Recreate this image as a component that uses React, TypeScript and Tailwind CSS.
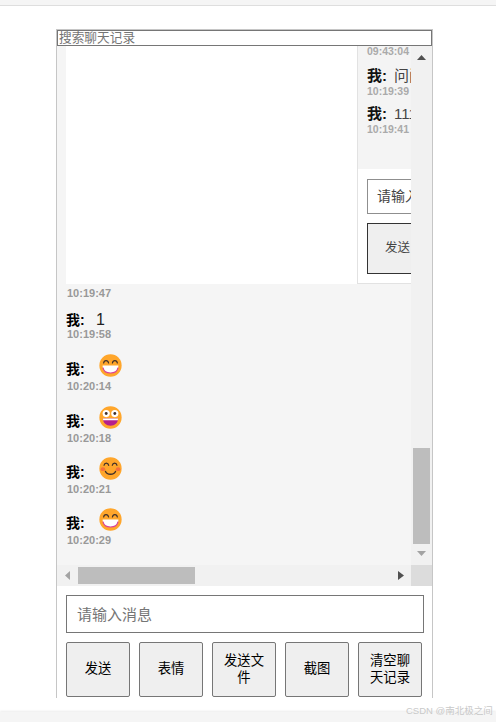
const font = { fontFamily: '"Liberation Sans", "Noto Sans CJK SC", sans-serif' }

function Grin() {
  return (
    <svg width="23" height="23" viewBox="0 0 32 32">
      <circle cx="16" cy="16" r="15.5" fill="#ffa62b" />
      <path d="M6.5 12.5c.5-4.5 6-4.5 6.8 0M18.7 12.5c.6-4.5 6.2-4.5 6.8 0" fill="none" stroke="#40302a" strokeWidth="1.7" strokeLinecap="round" />
      <path d="M5 16h22c0 6.5-4.5 10.5-11 10.5S5 22.5 5 16z" fill="#fff" />
      <path d="M5.5 19c1 5 5 7.5 10.5 7.5s9.5-2.5 10.5-7.5" fill="none" stroke="#d8409a" strokeWidth="1.6" />
    </svg>
  )
}

function Wow() {
  return (
    <svg width="23" height="23" viewBox="0 0 32 32">
      <circle cx="16" cy="16" r="15.5" fill="#ffa62b" />
      <circle cx="10" cy="10.5" r="5" fill="#fff" />
      <circle cx="22" cy="10.5" r="5" fill="#fff" />
      <circle cx="10" cy="10.5" r="2" fill="#40302a" />
      <circle cx="22" cy="10.5" r="2" fill="#40302a" />
      <path d="M5.5 17.5h21c0 6-4.5 10-10.5 10s-10.5-4-10.5-10z" fill="#b5208c" />
      <path d="M5.5 17.5h21l-.3 2.2h-20.4z" fill="#fff" />
    </svg>
  )
}

function Smile() {
  return (
    <svg width="23" height="23" viewBox="0 0 32 32">
      <circle cx="16" cy="16" r="15.5" fill="#ffa62b" />
      <ellipse cx="5.5" cy="17" rx="3.2" ry="2.6" fill="#f5703c" />
      <ellipse cx="26.5" cy="17" rx="3.2" ry="2.6" fill="#f5703c" />
      <path d="M7 11.5c.7-4 5.7-4 6.5 0M18.5 11.5c.7-4 5.8-4 6.5 0" fill="none" stroke="#40302a" strokeWidth="1.7" strokeLinecap="round" />
      <path d="M9 20c2 5.5 12 5.5 14 0" fill="none" stroke="#40302a" strokeWidth="2" strokeLinecap="round" />
    </svg>
  )
}

function EmojiMsg({ time, children }: { time: string; children: React.ReactNode }) {
  return (
    <div className="mt-[12.3px] flex flex-col">
      <div className="flex h-[23px] items-end">
        <b className="w-[33px] text-[14px] leading-[16px] text-black">我:</b>
        {children}
      </div>
      <span className="mt-[3px] pl-[1px] text-[11px] font-bold leading-[13px] text-[#999]">{time}</span>
    </div>
  )
}

function NestedMsg({ text, time }: { text: string; time: string }) {
  return (
    <div className="mb-[9px] flex flex-col">
      <div className="flex h-[16px] items-center whitespace-nowrap text-[15px] leading-[16px]">
        <b className="w-[27px] text-[#111]">我:</b>
        <span className="text-[#444]">{text}</span>
      </div>
      <span className="mt-[1px] text-[10.5px] font-bold leading-[12px] text-[#aaa]">{time}</span>
    </div>
  )
}

export default function App() {
  const buttons = ['发送', '表情', '发送文件', '截图', '清空聊天记录']

  return (
    <div className="relative flex h-[722px] w-[496px] flex-col overflow-hidden bg-white" style={font}>
      <div className="h-[6px] shrink-0 border-b border-[#dedede] bg-[#f5f5f5]" />

      <div className="ml-[56px] mt-[23px] flex h-[669px] w-[377px] shrink-0 flex-col self-start overflow-hidden border-x border-t border-[#c6c6c6]">
        {/* search */}
        <input
          readOnly
          placeholder="搜索聊天记录"
          className="h-[16px] w-full shrink-0 border border-[#767676] bg-white px-[1px] text-[12.7px] leading-[14px] outline-none placeholder:text-[#757575]"
        />

        {/* scrolling chat area */}
        <div className="flex h-[519px] shrink-0 bg-[#f5f5f5]">
          <div className="w-[354px] overflow-hidden">
            <div className="flex h-[238px] pl-[9px]">
              <div className="h-full w-[291px] shrink-0 bg-white" />
              <div className="flex h-full w-[54px] shrink-0 flex-col overflow-hidden border-b border-l border-[#e2e2e2] bg-white">
                <div className="h-[123px] w-[80px] shrink-0 overflow-hidden bg-[#f4f4f4] pl-[9px]">
                  <div className="h-[11px] text-[10.5px] font-bold leading-[11px] text-[#aaa]">09:43:04</div>
                  <div className="mt-[11px]">
                    <NestedMsg text="问问" time="10:19:39" />
                    <NestedMsg text="111" time="10:19:41" />
                  </div>
                </div>
                <div className="w-[80px] pl-[9px] pt-[10px]">
                  <div className="flex h-[35px] w-[70px] items-center whitespace-nowrap border border-[#8f8f8f] pl-[9px] text-[14px] text-[#444]">
                    请输入消息
                  </div>
                  <div className="mt-[9px] flex h-[51px] w-[70px] items-center border border-[#333] bg-[#efefef] pl-[17px] text-[12.5px] text-[#444]">
                    发送
                  </div>
                </div>
              </div>
            </div>

            <div className="flex flex-col pl-[9px]">
              <span className="mt-[3px] pl-[1px] text-[11px] font-bold leading-[13px] text-[#999]">10:19:47</span>
              <div className="mt-[12px] flex h-[16px] items-center text-[14px] leading-[16px]">
                <b className="w-[30px] text-black">我:</b>
                <span className="text-[16px] text-[#222]">1</span>
              </div>
              <span className="mb-[1px] pl-[1px] text-[11px] font-bold leading-[13px] text-[#999]">10:19:58</span>
              <EmojiMsg time="10:20:14"><Grin /></EmojiMsg>
              <EmojiMsg time="10:20:18"><Wow /></EmojiMsg>
              <EmojiMsg time="10:20:21"><Smile /></EmojiMsg>
              <EmojiMsg time="10:20:29"><Grin /></EmojiMsg>
            </div>
          </div>

          {/* vertical scrollbar */}
          <div className="flex w-[21px] shrink-0 flex-col items-center bg-[#f1f1f1]">
            <svg className="mt-[9px]" width="9" height="5" viewBox="0 0 9 5"><path d="M4.5 0L9 5H0z" fill="#505050" /></svg>
            <div className="flex-1" />
            <div className="h-[96px] w-[17px] bg-[#bdbdbd]" />
            <svg className="mb-[9px] mt-[7px]" width="9" height="5" viewBox="0 0 9 5"><path d="M0 0h9L4.5 5z" fill="#a3a3a3" /></svg>
          </div>
        </div>

        {/* horizontal scrollbar */}
        <div className="flex h-[21px] shrink-0">
          <div className="flex w-[354px] items-center bg-[#f1f1f1] pl-[8px]">
            <svg width="5" height="9" viewBox="0 0 5 9"><path d="M5 0v9L0 4.5z" fill="#a3a3a3" /></svg>
            <div className="ml-[8px] h-[17px] w-[117px] bg-[#bdbdbd]" />
            <div className="flex-1" />
            <svg className="mr-[7px]" width="6" height="9" viewBox="0 0 6 9"><path d="M0 0v9l6-4.5z" fill="#505050" /></svg>
          </div>
          <div className="w-[21px] bg-[#dcdcdc]" />
        </div>

        {/* message box */}
        <div className="flex flex-col bg-white pl-[9px] pt-[9px]">
          <input
            readOnly
            placeholder="请输入消息"
            className="h-[38px] w-[358px] border border-[#767676] bg-white px-[10px] text-[15px] outline-none placeholder:text-[#757575]"
          />
          <div className="mt-[9px] flex gap-[9px]">
            {buttons.map((label) => (
              <button
                key={label}
                className="h-[55px] w-[64px] shrink-0 rounded-[2px] border border-[#767676] bg-[#efefef] px-[6px] text-[13.33px] leading-[16.5px] text-black"
              >
                {label}
              </button>
            ))}
          </div>
        </div>
      </div>

      <div className="h-[14px] shrink-0 bg-white" />
      <div className="flex-1 bg-[#f5f5f5] shadow-[0_-1px_2px_rgba(0,0,0,0.08)]" />

      <span className="absolute left-[406px] top-[704px] whitespace-nowrap text-[9.5px] leading-[14px] text-[#c9c9c9]">
        CSDN @南北极之间
      </span>
    </div>
  )
}
